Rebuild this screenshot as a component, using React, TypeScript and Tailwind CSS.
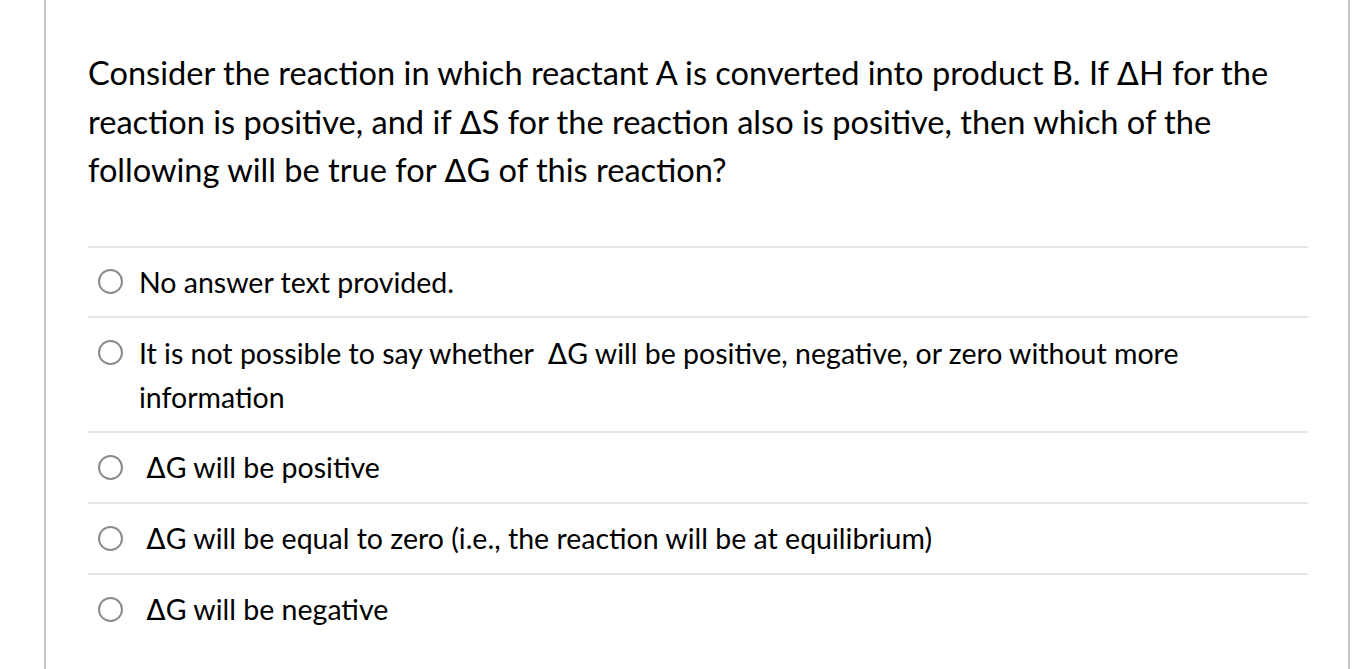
const D = () => <span className="leading-[0]" style={{ fontFamily: "'DejaVu Sans', sans-serif" }}>Δ</span>;

const options: React.ReactNode[] = [
  <>No answer text provided.</>,
  <>
    It is not possible to say whether&nbsp; <D />G will be positive, negative, or zero without more information
  </>,
  <>
    &nbsp;<D />G will be positive
  </>,
  <>
    &nbsp;<D />G will be equal to zero (i.e., the reaction will be at equilibrium)
  </>,
  <>
    &nbsp;<D />G will be negative
  </>,
];

export default function App() {
  return (
    <div className="h-[669px] w-[1372px] overflow-hidden bg-white font-['Lato',sans-serif] text-black">
      <div className="ml-[44px] h-full w-[1306px] border-x-2 border-[#c6c6c6] pl-[42px] pr-[40px]">
        <div className="pt-[49px] pb-[51px] text-[32.6px] leading-[48.5px]">
          Consider the reaction in which reactant A is converted into product B. If <D />H for the reaction is
          positive, and if <D />S for the reaction also is positive, then which of the following will be true for{" "}
          <D />G of this reaction?
        </div>
        <div className="border-t-2 border-[#e6e6e6]">
          {options.map((o, i) => (
            <div
              key={i}
              className={`flex items-start py-[12.4px] ${i < options.length - 1 ? "border-b-2 border-[#e6e6e6]" : ""}`}
            >
              <div className="flex h-[44px] w-[51px] shrink-0 items-center pl-[10px]">
                <span className="block h-[25px] w-[25px] rounded-full border-2 border-[#8a8a8a]" />
              </div>
              <div className="pr-[20px] text-[28.5px] leading-[44px]">{o}</div>
            </div>
          ))}
        </div>
      </div>
    </div>
  );
}
